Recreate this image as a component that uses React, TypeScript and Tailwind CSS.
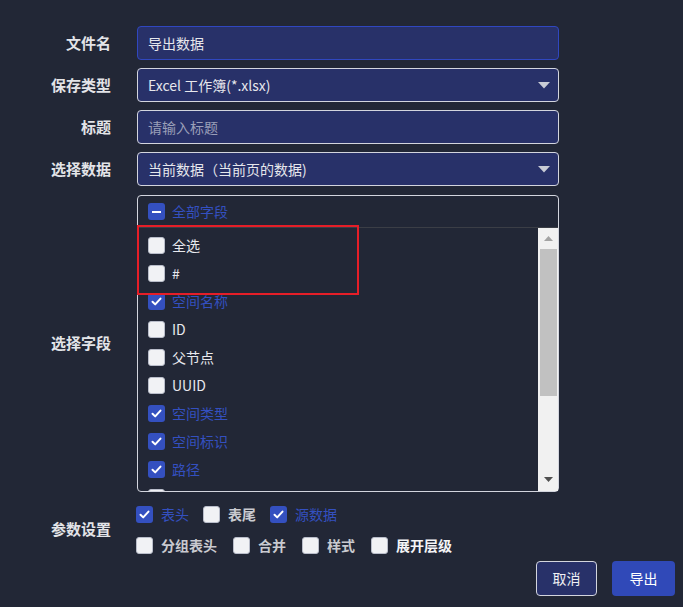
import React from "react";

const FONT = '"Noto Sans CJK SC", "Noto Sans", sans-serif';

function Check({ checked, indeterminate }: { checked?: boolean; indeterminate?: boolean }) {
  if (indeterminate) {
    return (
      <span className="w-[17px] h-[17px] rounded-[3px] bg-[#3450c0] flex items-center justify-center shrink-0">
        <span className="w-[9px] h-[2px] bg-white" />
      </span>
    );
  }
  if (checked) {
    return (
      <span className="w-[17px] h-[17px] rounded-[3px] bg-[#3450c0] flex items-center justify-center shrink-0">
        <svg width="13" height="13" viewBox="0 0 13 13">
          <path d="M2.5 6.8 L5.2 9.4 L10.5 3.6" stroke="white" strokeWidth="2" fill="none" strokeLinecap="round" strokeLinejoin="round" />
        </svg>
      </span>
    );
  }
  return <span className="w-[17px] h-[17px] rounded-[3px] bg-[#f1f2f5] border border-[#b9bdca] shrink-0" />;
}

function Caret() {
  return (
    <svg width="12" height="7" viewBox="0 0 12 7" className="shrink-0">
      <path d="M0 0 L12 0 L6 6.5 Z" fill="#c9ccd6" />
    </svg>
  );
}

function Label({ children }: { children: React.ReactNode }) {
  return <div className="w-[111px] text-right font-bold text-[15px] text-[#e3e4e8] shrink-0">{children}</div>;
}

const items: { t: string; c: boolean }[] = [
  { t: "全选", c: false },
  { t: "#", c: false },
  { t: "空间名称", c: true },
  { t: "ID", c: false },
  { t: "父节点", c: false },
  { t: "UUID", c: false },
  { t: "空间类型", c: true },
  { t: "空间标识", c: true },
  { t: "路径", c: true },
  { t: "所属楼层", c: false },
];

function Param({ t, c, strong }: { t: string; c?: boolean; strong?: boolean }) {
  return (
    <div className="flex items-center gap-[8px]">
      <Check checked={c} />
      <span
        className={
          c
            ? "text-[14px] text-[#3450c0]"
            : strong
            ? "text-[14px] font-bold text-[#f4f4f6]"
            : "text-[14px] font-semibold text-[#c9cad0]"
        }
      >
        {t}
      </span>
    </div>
  );
}

export default function App() {
  return (
    <div className="w-[683px] h-[607px] bg-[#222736] relative overflow-hidden" style={{ fontFamily: FONT }}>
      <div className="pt-[26px] flex flex-col">
        <div className="flex items-center">
          <Label>文件名</Label>
          <div className="ml-[26px] w-[422px] h-[34px] rounded-[4px] border border-[#3047c0] bg-[#283169] px-[10px] flex items-center text-[14px] text-[#e6e7ec]">
            导出数据
          </div>
        </div>
        <div className="flex items-center mt-[8px]">
          <Label>保存类型</Label>
          <div className="ml-[26px] w-[422px] h-[34px] rounded-[4px] border border-[#d3d5de] bg-[#283169] pl-[10px] pr-[8px] flex items-center justify-between text-[14px] text-[#e6e7ec]">
            <span>Excel 工作簿(*.xlsx)</span>
            <Caret />
          </div>
        </div>
        <div className="flex items-center mt-[8px]">
          <Label>标题</Label>
          <div className="ml-[26px] w-[422px] h-[34px] rounded-[4px] border border-[#d3d5de] bg-[#283169] px-[10px] flex items-center text-[14px] text-[#9a9fb8]">
            请输入标题
          </div>
        </div>
        <div className="flex items-center mt-[8px]">
          <Label>选择数据</Label>
          <div className="ml-[26px] w-[422px] h-[34px] rounded-[4px] border border-[#d3d5de] bg-[#283169] pl-[10px] pr-[8px] flex items-center justify-between text-[14px] text-[#e6e7ec]">
            <span>当前数据（当前页的数据)</span>
            <Caret />
          </div>
        </div>

        <div className="flex items-center mt-[9px]">
          <Label>选择字段</Label>
          <div className="ml-[26px] w-[422px] h-[297px] rounded-[4px] border border-[#d3d5de] flex flex-col relative">
            <div className="h-[32px] border-b border-[#3b3e46] flex items-center pl-[10px] gap-[7px] shrink-0">
              <Check indeterminate />
              <span className="text-[14px] text-[#3450c0]">全部字段</span>
            </div>
            <div className="flex flex-1 min-h-0">
              <div className="flex-1 overflow-hidden pt-[3px] flex flex-col">
                {items.map((it) => (
                  <div key={it.t} className="h-[28px] shrink-0 flex items-center pl-[10px] gap-[7px]">
                    <Check checked={it.c} />
                    <span className={it.c ? "text-[14px] text-[#3450c0]" : "text-[14px] text-[#e8e9ee]"}>{it.t}</span>
                  </div>
                ))}
              </div>
              <div className="w-[20px] bg-[#f1f1f1] flex flex-col items-center shrink-0">
                <div className="h-[21px] flex items-center justify-center">
                  <svg width="9" height="5" viewBox="0 0 9 5">
                    <path d="M0 5 L4.5 0 L9 5 Z" fill="#a3a3a3" />
                  </svg>
                </div>
                <div className="w-[17px] h-[147px] bg-[#c1c1c1]" />
                <div className="flex-1" />
                <div className="h-[24px] flex items-center justify-center">
                  <svg width="9" height="5" viewBox="0 0 9 5">
                    <path d="M0 0 L9 0 L4.5 5 Z" fill="#505050" />
                  </svg>
                </div>
              </div>
            </div>
            <div className="absolute left-[-1px] top-[29px] w-[222px] h-[70px] border-2 border-[#e61e28] pointer-events-none" />
          </div>
        </div>

        <div className="flex items-center mt-[12px]">
          <Label>参数设置</Label>
          <div className="ml-[25px] flex flex-col gap-[11px]">
            <div className="h-[20px] flex items-center gap-[14px]">
              <Param t="表头" c />
              <Param t="表尾" />
              <Param t="源数据" c />
            </div>
            <div className="h-[20px] flex items-center gap-[16px]">
              <Param t="分组表头" />
              <Param t="合并" />
              <Param t="样式" />
              <Param t="展开层级" strong />
            </div>
          </div>
        </div>

        <div className="flex justify-end gap-[15px] pr-[8px] mt-[6px]">
          <div className="w-[61px] h-[35px] rounded-[4px] border border-[#d3d5de] bg-[#283169] flex items-center justify-center text-[14px] text-[#f0f0f4]">
            取消
          </div>
          <div className="w-[63px] h-[35px] rounded-[4px] bg-[#3049b8] flex items-center justify-center text-[14px] text-white">
            导出
          </div>
        </div>
      </div>
    </div>
  );
}
